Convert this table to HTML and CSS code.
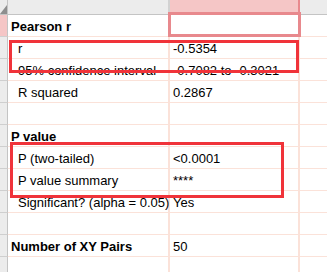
FILE: index.html
```html
<!DOCTYPE html>
<html>
<head>
<meta charset="utf-8">
<link rel="stylesheet" href="styles.css">
</head>
<body>
<div class="sheet">
  <div class="row head">
    <div class="corner">
      <svg class="tri" width="7" height="9" viewBox="0 0 7 9"><polygon points="0,9 7,9 7,0" fill="#8e8e8e"/></svg>
    </div>
    <div class="h ha"></div>
    <div class="h hb"></div>
    <div class="h hc"></div>
  </div>
  <div class="row">
    <div class="rh rsel"></div>
    <div class="a bold">Pearson r</div>
    <div class="b"></div>
    <div class="c"></div>
  </div>
  <div class="row">
    <div class="rh"></div>
    <div class="a ind">r</div>
    <div class="b">-0.5354</div>
    <div class="c"></div>
  </div>
  <div class="row">
    <div class="rh"></div>
    <div class="a ind">95% confidence interval</div>
    <div class="b">-0.7082 to -0.3021</div>
    <div class="c"></div>
  </div>
  <div class="row">
    <div class="rh"></div>
    <div class="a ind">R squared</div>
    <div class="b">0.2867</div>
    <div class="c"></div>
  </div>
  <div class="row">
    <div class="rh"></div>
    <div class="a"></div>
    <div class="b"></div>
    <div class="c"></div>
  </div>
  <div class="row">
    <div class="rh"></div>
    <div class="a bold">P value</div>
    <div class="b"></div>
    <div class="c"></div>
  </div>
  <div class="row">
    <div class="rh"></div>
    <div class="a ind">P (two-tailed)</div>
    <div class="b">&lt;0.0001</div>
    <div class="c"></div>
  </div>
  <div class="row">
    <div class="rh"></div>
    <div class="a ind">P value summary</div>
    <div class="b">****</div>
    <div class="c"></div>
  </div>
  <div class="row">
    <div class="rh"></div>
    <div class="a ind">Significant? (alpha = 0.05)</div>
    <div class="b">Yes</div>
    <div class="c"></div>
  </div>
  <div class="row">
    <div class="rh"></div>
    <div class="a"></div>
    <div class="b"></div>
    <div class="c"></div>
  </div>
  <div class="row">
    <div class="rh"></div>
    <div class="a bold">Number of XY Pairs</div>
    <div class="b">50</div>
    <div class="c"></div>
  </div>
  <div class="row">
    <div class="rh"></div>
    <div class="a"></div>
    <div class="b"></div>
    <div class="c"></div>
  </div>
  <div class="selbox"></div>
  <div class="mark mark1"></div>
  <div class="mark mark2"></div>
</div>
</body>
</html>
```
FILE: styles.css
```css
html, body {
  margin: 0;
  padding: 0;
  background: #ffffff;
}
body {
  width: 327px;
  height: 272px;
  overflow: hidden;
  font-family: "Liberation Sans", Arial, sans-serif;
  font-size: 13px;
  color: #000;
}
.sheet {
  position: relative;
  width: 327px;
  height: 272px;
  overflow: hidden;
}
.row {
  display: grid;
  grid-template-columns: 8px 162px 130px 27px;
  height: 22px;
}
.row.head {
  height: 15px;
}
.row > div {
  box-sizing: border-box;
  white-space: nowrap;
}
.corner {
  background: #ececec;
  border-right: 1px solid #c4c4c4;
  border-bottom: 1px solid #c4c4c4;
  position: relative;
}
.tri {
  position: absolute;
  left: 0;
  bottom: 0;
  display: block;
}
.h {
  background: #ececec;
  border-bottom: 1px solid #c4c4c4;
}
.ha {
  border-right: 2px solid #d2d2d2;
}
.hb {
  background: #f5c6c6;
  border-bottom: none;
  border-right: 2px solid #e8898d;
}
.rh {
  background: #ececec;
  border-right: 1px solid #c4c4c4;
  border-bottom: 1px solid #cfcfcf;
}
.rh.rsel {
  background: #f5c6c6;
}
.a, .b, .c {
  border-bottom: 1px solid #fbe2d9;
  padding-top: 2px;
  line-height: 19px;
}
.a {
  border-right: 2px solid #fbe2d9;
  padding-left: 3px;
  overflow: visible;
  position: relative;
  z-index: 1;
}
.b {
  border-right: 2px solid #fbe2d9;
  padding-left: 3px;
}
.bold {
  font-weight: bold;
}
.ind {
  padding-left: 10px;
}
.selbox {
  position: absolute;
  left: 168px;
  top: 12px;
  width: 133px;
  height: 25px;
  box-sizing: border-box;
  border: 3px solid #e8898d;
  z-index: 2;
}
.mark {
  position: absolute;
  box-sizing: border-box;
  border: 3px solid #f0333a;
  z-index: 3;
}
.mark1 {
  left: 9px;
  top: 40px;
  width: 290px;
  height: 33px;
}
.mark2 {
  left: 10px;
  top: 142px;
  width: 274px;
  height: 56px;
}
```
